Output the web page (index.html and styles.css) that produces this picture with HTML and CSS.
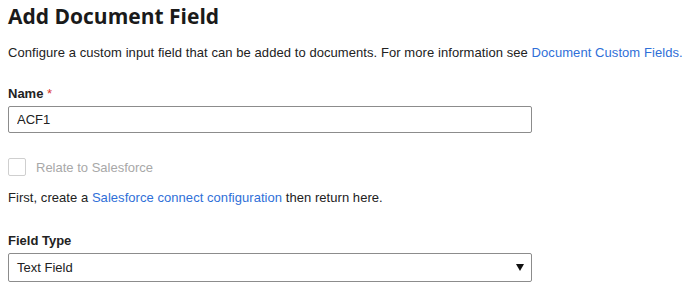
FILE: index.html
```html
<!DOCTYPE html>
<html lang="en">
<head>
    <meta charset="UTF-8">
    <title>Add Document Field</title>
    <link rel="stylesheet" href="styles.css">
</head>
<body>
    <div class="field-form">
        <h1 class="form-title">Add Document Field</h1>
        <p class="form-intro">Configure a custom input field that can be added to documents. For more information see <a href="#">Document Custom Fields.</a></p>

        <div class="form-group">
            <label class="form-label" for="fieldName">Name <span class="required">*</span></label>
            <input class="form-input" id="fieldName" type="text" value="ACF1">
        </div>

        <label class="checkbox-row">
            <span class="checkbox-box"></span>
            <span class="checkbox-text">Relate to Salesforce</span>
        </label>

        <p class="form-note">First, create a <a href="#">Salesforce connect configuration</a> then return here.</p>

        <div class="form-group type-group">
            <label class="form-label" for="fieldType">Field Type</label>
            <div class="select-wrap">
                <div class="form-select" id="fieldType">Text Field</div>
                <span class="select-arrow"></span>
            </div>
        </div>
    </div>
</body>
</html>
```

FILE: styles.css
```css
body {
    margin: 0;
    padding: 0 8px;
    font-family: 'Liberation Sans', Arial, sans-serif;
    font-size: 13px;
    color: #222;
    background: #fff;
}

a {
    color: #2f6fd8;
    text-decoration: none;
}

.form-title {
    font-family: 'Open Sans', sans-serif;
    font-size: 21px;
    font-weight: 700;
    color: #1a1a1a;
    margin: 0;
    padding-top: 2px;
    line-height: 28px;
}

.form-intro {
    margin: 15px 0 0;
    line-height: 16px;
    letter-spacing: 0.07px;
    white-space: nowrap;
}

.form-group {
    margin-top: 25px;
}

.type-group {
    margin-top: 27px;
}

.form-label {
    display: block;
    font-weight: bold;
    line-height: 16px;
    margin-bottom: 4px;
}

.required {
    color: #d9342b;
    font-weight: normal;
}

.form-input,
.form-select {
    display: block;
    box-sizing: border-box;
    width: 524px;
    height: 27px;
    margin: 0;
    padding: 0 8px;
    border: 1px solid #8c8c8c;
    border-radius: 2px;
    font-family: inherit;
    font-size: 13px;
    color: #222;
    line-height: 25px;
}

.checkbox-row {
    display: flex;
    align-items: center;
    gap: 10px;
    margin-top: 25px;
    color: #a8a8a8;
}

.checkbox-box {
    width: 16px;
    height: 16px;
    border: 1px solid #cfcfcf;
    border-radius: 2px;
}

.form-note {
    margin: 14px 0 0;
    line-height: 16px;
    letter-spacing: 0.05px;
}

.select-wrap {
    position: relative;
    width: 524px;
}

.form-select {
    height: 29px;
    line-height: 27px;
}

.select-arrow {
    position: absolute;
    right: 8px;
    top: 11px;
    width: 0;
    height: 0;
    border-left: 4.5px solid transparent;
    border-right: 4.5px solid transparent;
    border-top: 7px solid #111;
}
```
